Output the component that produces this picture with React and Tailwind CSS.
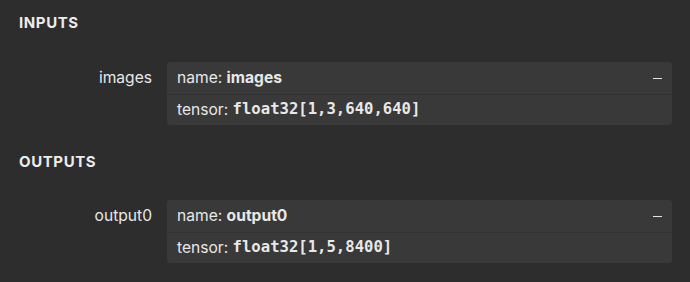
const sans = "font-['Inter','Noto_Sans',sans-serif]";
const mono = "font-['DejaVu_Sans_Mono','Liberation_Mono',monospace]";

function Tensor({ label, name, type }) {
  return (
    <div className="flex items-start pl-[19px]">
      <div className="w-[133px] text-right text-[15.6px] leading-[20px] pt-[6px] text-[#e8e8e8]">{label}</div>
      <div className="ml-[15px] w-[505px] rounded-[3px] bg-[#393939] text-[15.6px] text-[#e8e8e8]">
        <div className="flex items-center justify-between h-[33px] px-[10px] border-b border-[#323232]">
          <span>
            name: <span className="font-bold">{name}</span>
          </span>
          <span className="block w-[9px] h-px bg-[#e4e4e4]" />
        </div>
        <div className="flex items-center h-[30px] px-[10px]">
          <span>tensor:&nbsp;</span>
          <span className={`${mono} font-bold text-[15.6px]`}>{type}</span>
        </div>
      </div>
    </div>
  );
}

export default function App() {
  return (
    <div className={`${sans} w-[690px] h-[282px] bg-[#2d2d2d] pt-[13px] overflow-hidden`}>
      <h2 className="pl-[19px] text-[15px] leading-[20px] font-bold tracking-[0.04em] text-[#ececec]">INPUTS</h2>
      <div className="mt-[29px]">
        <Tensor label="images" name="images" type="float32[1,3,640,640]" />
      </div>
      <h2 className="mt-[27px] pl-[19px] text-[15px] leading-[20px] font-bold tracking-[0.04em] text-[#ececec]">OUTPUTS</h2>
      <div className="mt-[28px]">
        <Tensor label="output0" name="output0" type="float32[1,5,8400]" />
      </div>
    </div>
  );
}
